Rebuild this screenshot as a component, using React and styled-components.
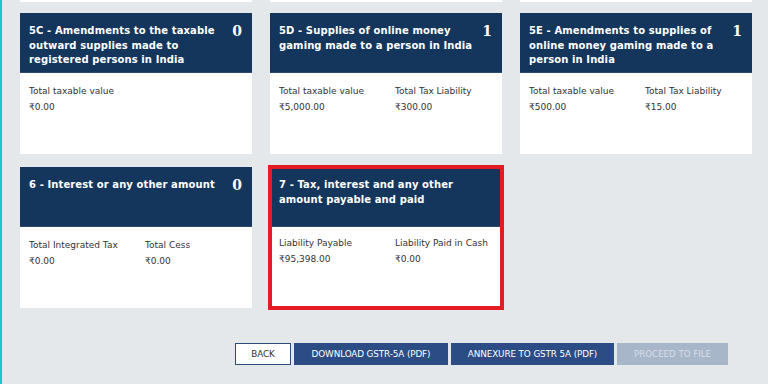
import React from "react";
import styled, { createGlobalStyle } from "styled-components";

const GlobalStyle = createGlobalStyle`
  html, body {
    margin: 0;
    padding: 0;
    background: #e4e8eb;
  }
  body {
    font-family: "DejaVu Sans", Verdana, sans-serif;
  }
`;

const Page = styled.div`
  width: 768px;
  height: 384px;
  box-sizing: border-box;
  border-left: 2px solid #19c6ca;
  padding-left: 18px;
  overflow: hidden;
  display: flex;
  flex-direction: column;
`;

const Grid = styled.div`
  display: grid;
  grid-template-columns: repeat(3, 232px);
  column-gap: 18px;
  row-gap: 13px;
`;

const Strip = styled.div`
  height: 2px;
  margin-bottom: -2px;
  background: #ffffff;
`;

const Card = styled.div`
  box-sizing: border-box;
  height: 141px;
  background: #ffffff;
  display: flex;
  flex-direction: column;
  ${({ highlight }) =>
    highlight &&
    `
    border: 2px solid #e51b24;
    outline: 2px solid #e51b24;
  `}
`;

const Header = styled.div`
  box-sizing: border-box;
  height: ${({ highlight }) => (highlight ? "58px" : "60px")};
  background: #14365c;
  color: #ffffff;
  display: flex;
  justify-content: space-between;
  align-items: flex-start;
  padding: ${({ highlight }) => (highlight ? "9px 8px 0 7px" : "11px 10px 0 9px")};
  border-bottom: 1px solid #2a4a70;
`;

const Title = styled.div`
  font-size: 10px;
  font-weight: bold;
  line-height: 14.5px;
  letter-spacing: 0.1px;
  max-width: 200px;
`;

const Count = styled.div`
  font-family: "DejaVu Serif", "Liberation Serif", serif;
  font-size: 14px;
  font-weight: bold;
  line-height: 14px;
`;

const Body = styled.div`
  display: grid;
  grid-template-columns: 116px 1fr;
  padding: ${({ highlight }) => (highlight ? "10px 0 0 7px" : "12px 0 0 9px")};
`;

const Stat = styled.div`
  display: flex;
  flex-direction: column;
  gap: 3px;
  font-size: 9px;
  color: #333333;
  line-height: 13px;
`;

const Footer = styled.div`
  display: flex;
  justify-content: flex-end;
  gap: 3px;
  padding: 0 40px 0 0;
  margin-top: 35px;
`;

const Button = styled.button`
  box-sizing: border-box;
  height: 22px;
  width: ${({ w }) => w};
  padding: 0;
  font-family: "DejaVu Sans", Verdana, sans-serif;
  font-size: 8.8px;
  letter-spacing: -0.1px;
  text-transform: uppercase;
  border: 1px solid ${({ variant }) =>
    variant === "outline" ? "#2c4a7a" : variant === "disabled" ? "#a8b6ca" : "#2b4c85"};
  background: ${({ variant }) =>
    variant === "outline" ? "#ffffff" : variant === "disabled" ? "#a8b6ca" : "#2b4c85"};
  color: ${({ variant }) =>
    variant === "outline" ? "#333333" : variant === "disabled" ? "#d6dde8" : "#ffffff"};
  cursor: ${({ variant }) => (variant === "disabled" ? "default" : "pointer")};
`;

const rowOne = [
  {
    title: "5C - Amendments to the taxable outward supplies made to registered persons in India",
    count: 0,
    stats: [["Total taxable value", "₹0.00"]],
  },
  {
    title: "5D - Supplies of online money gaming made to a person in India",
    count: 1,
    stats: [
      ["Total taxable value", "₹5,000.00"],
      ["Total Tax Liability", "₹300.00"],
    ],
  },
  {
    title: "5E - Amendments to supplies of online money gaming made to a person in India",
    count: 1,
    stats: [
      ["Total taxable value", "₹500.00"],
      ["Total Tax Liability", "₹15.00"],
    ],
  },
];

const rowTwo = [
  {
    title: "6 - Interest or any other amount",
    count: 0,
    stats: [
      ["Total Integrated Tax", "₹0.00"],
      ["Total Cess", "₹0.00"],
    ],
  },
  {
    title: "7 - Tax, interest and any other amount payable and paid",
    highlight: true,
    stats: [
      ["Liability Payable", "₹95,398.00"],
      ["Liability Paid in Cash", "₹0.00"],
    ],
  },
];

const Tile = ({ title, count, stats, highlight }) => (
  <Card highlight={highlight}>
    <Header highlight={highlight}>
      <Title>{title}</Title>
      {count !== undefined && <Count>{count}</Count>}
    </Header>
    <Body highlight={highlight}>
      {stats.map(([label, value]) => (
        <Stat key={label}>
          <span>{label}</span>
          <span>{value}</span>
        </Stat>
      ))}
    </Body>
  </Card>
);

export default function App() {
  return (
    <Page>
      <GlobalStyle />
      <Grid>
        <Strip />
        <Strip />
        <Strip />
        {rowOne.map((t) => (
          <Tile key={t.title} {...t} />
        ))}
        {rowTwo.map((t) => (
          <Tile key={t.title} {...t} />
        ))}
      </Grid>
      <Footer>
        <Button variant="outline" w="56px">Back</Button>
        <Button w="154px">Download GSTR-5A (PDF)</Button>
        <Button w="163px">Annexure to GSTR 5A (PDF)</Button>
        <Button variant="disabled" w="111px">Proceed to File</Button>
      </Footer>
    </Page>
  );
}
